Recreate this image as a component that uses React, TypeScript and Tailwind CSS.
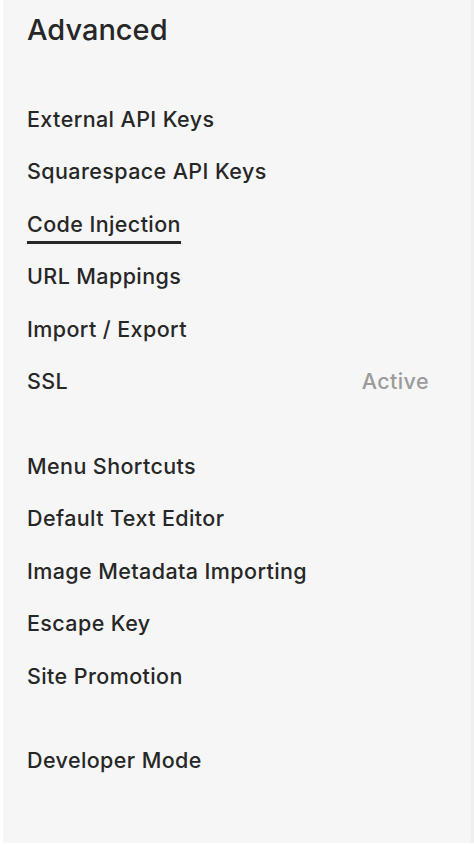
import React from 'react';

type Item = { label: string; active?: boolean; status?: string };

const groups: Item[][] = [
  [
    { label: 'External API Keys' },
    { label: 'Squarespace API Keys' },
    { label: 'Code Injection', active: true },
    { label: 'URL Mappings' },
    { label: 'Import / Export' },
    { label: 'SSL', status: 'Active' },
  ],
  [
    { label: 'Menu Shortcuts' },
    { label: 'Default Text Editor' },
    { label: 'Image Metadata Importing' },
    { label: 'Escape Key' },
    { label: 'Site Promotion' },
  ],
  [{ label: 'Developer Mode' }],
];

function Row({ item }: { item: Item }) {
  return (
    <div className="h-[52.5px] flex items-center justify-between">
      <span className="relative text-[21.5px] leading-none font-medium tracking-[0.4px] text-[#272727]">
        {item.label}
        {item.active && (
          <span className="absolute left-0 right-0 -bottom-[9px] h-[3px] bg-[#272727]" />
        )}
      </span>
      {item.status && (
        <span className="text-[21.5px] leading-none font-medium tracking-[0.4px] text-[#9b9b9b]">
          {item.status}
        </span>
      )}
    </div>
  );
}

export default function App() {
  return (
    <div
      className="w-[474px] h-[845px] bg-white pl-[3px] pb-[2px]"
      style={{ fontFamily: 'Inter, "Liberation Sans", sans-serif' }}
    >
      <div className="h-full bg-[#f6f6f6] pl-[24px] pr-[42px] border-r-[3px] border-[#efefef]">
        <div className="h-[58px] flex items-center">
          <h1 className="text-[29px] leading-none font-medium text-[#272727]">Advanced</h1>
        </div>
        <div className="mt-[35px] flex flex-col gap-[32px]">
          {groups.map((g, i) => (
            <div key={i}>
              {g.map((item) => (
                <Row key={item.label} item={item} />
              ))}
            </div>
          ))}
        </div>
      </div>
    </div>
  );
}
